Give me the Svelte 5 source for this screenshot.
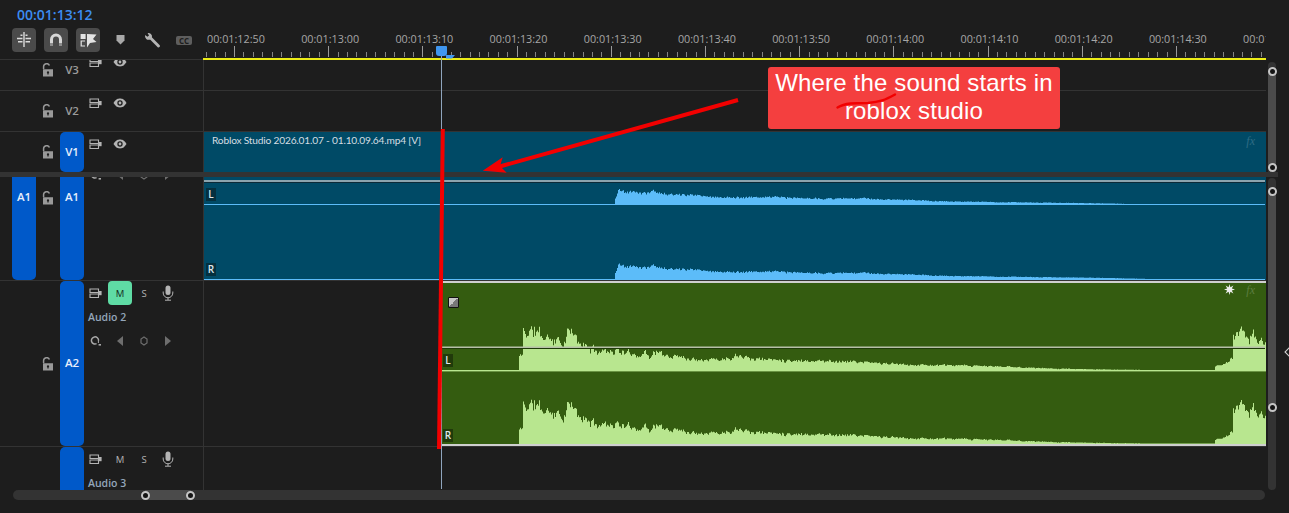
<script>
  const rulerLabels = ['00:01:12:50','00:01:13:00','00:01:13:10','00:01:13:20','00:01:13:30','00:01:13:40','00:01:13:50','00:01:14:00','00:01:14:10','00:01:14:20','00:01:14:30','00:01:14:40'];
  const step = 94.2 / 10;
  const ticks = [];
  for (let i = -3; i < 112; i++) ticks.push({ x: 31 + i * step, major: i % 10 === 0 });

  function rng(seed) {
    let s = seed >>> 0;
    return () => {
      s = (s + 0x6d2b79f5) >>> 0;
      let t = Math.imul(s ^ (s >>> 15), 1 | s);
      t = (t + Math.imul(t ^ (t >>> 7), 61 | t)) ^ t;
      return ((t ^ (t >>> 14)) >>> 0) / 4294967296;
    };
  }
  function wave(points, base, seed, amount) {
    const r = rng(seed);
    let d = `M${points[0][0]} ${base}`;
    let seg = 0;
    let slow = 0;
    for (let x = points[0][0]; x < points[points.length - 1][0]; x++) {
      while (seg < points.length - 2 && x >= points[seg + 1][0]) seg++;
      const [x0, h0] = points[seg];
      const [x1, h1] = points[seg + 1];
      const h = h0 + ((h1 - h0) * (x - x0)) / (x1 - x0);
      slow = slow * 0.55 + (r() - 0.5) * 0.6;
      const v = h * (1 + slow * amount * 2 + (r() - 0.5) * amount);
      const y = (base - v).toFixed(1);
      d += `L${x} ${y}L${x + 1} ${y}`;
    }
    return d + `L${points[points.length - 1][0]} ${base}Z`;
  }
  const greenEnv = [[518,0],[519,14],[522,16],[523,40],[526,37],[532,40],[537,38],[543,33],[550,32],[558,31],[561,27],[565,30],[568,38],[572,38],[576,30],[581,25],[586,24],[592,21],[600,19],[606,21],[612,19],[618,20],[626,17],[636,17],[641,14],[645,20],[650,13],[656,20],[662,15],[672,14],[680,15],[690,11],[700,12],[720,11],[730,13],[741,17],[750,12],[770,11],[800,10],[850,9],[900,6],[950,5],[1000,4],[1050,2],[1100,1],[1150,0.5],[1214,0.5],[1215,5],[1225,6],[1229,9],[1232,12],[1233,40],[1240,37],[1250,33],[1265,29],[1266,29]];
  const blueEnv = [[614,0],[615,6],[618,14],[625,12],[632,13],[640,11],[655,13],[665,10],[680,10],[700,9],[720,7],[750,7],[775,8],[800,6],[850,6],[900,5],[950,3],[1000,2.4],[1100,1.2],[1150,0]];
  const greenL = wave(greenEnv, 370.5, 11, 0.2);
  const greenR = wave(greenEnv, 444, 11, 0.2);
  const blueL = wave(blueEnv, 204.5, 5, 0.16);
  const blueR = wave(blueEnv, 279, 5, 0.16);
</script>

{#snippet lock()}
  <svg class="lock" width="12" height="14" viewBox="0 0 12 14"><path d="M1.6 6 V3.6 A3 3 0 0 1 7.4 2.6" fill="none" stroke="#999" stroke-width="1.5"/><path fill-rule="evenodd" d="M1 6.2 H11 V13.4 H1 Z M6 8.2 a1.2 1.2 0 0 0 -.6 2.2 V11.6 H6.6 V10.4 a1.2 1.2 0 0 0 -.6 -2.2 Z" fill="#999"/></svg>
{/snippet}
{#snippet sync()}
  <svg class="ic" width="14" height="11" viewBox="0 0 14 11"><path d="M1 1 H9.5 V4.5 H1 Z M1 6 H9.5 V9.5 H1 Z" fill="none" stroke="#b4b4b4" stroke-width="1.1"/><rect x="9" y="3" width="3.6" height="4.2" fill="#b4b4b4"/></svg>
{/snippet}
{#snippet eye()}
  <svg class="ic" width="14" height="10" viewBox="0 0 14 10"><path d="M0.5 5 C3 1 5 .6 7 .6 S11 1 13.5 5 C11 9 9 9.4 7 9.4 S3 9 .5 5 Z" fill="#b4b4b4"/><circle cx="7" cy="5" r="2.7" fill="#1d1d1d"/><circle cx="7" cy="5" r="1.4" fill="#b4b4b4"/></svg>
{/snippet}
{#snippet mic()}
  <svg class="ic" width="12" height="16" viewBox="0 0 12 16"><rect x="3.5" y="0.5" width="5" height="9.5" rx="2.5" fill="#b4b4b4"/><path d="M1.2 6.5 V8 A4.8 4.8 0 0 0 10.8 8 V6.5 M6 12.8 V15 M3 15.2 H9" fill="none" stroke="#b4b4b4" stroke-width="1"/></svg>
{/snippet}

{#snippet videoRow(name, active, cls)}
  <div class="hdr {cls}">
    <div class="inner">
      <span class="src"></span>
      <span class="lockcell">{@render lock()}</span>
      <span class="chip vchip" class:on={active}>{name}</span>
      <div class="vctl">
        <span class="cell">{@render sync()}</span>
        <span class="cell">{@render eye()}</span>
      </div>
    </div>
  </div>
{/snippet}

{#snippet audioHead(name, label, muted, source, cls)}
  <div class="hdr {cls}">
    <div class="inner ainner">
      <span class="src">{#if source}<span class="chip on">{source}</span>{/if}</span>
      <span class="lockcell">{@render lock()}</span>
      <span class="chip on">{name}</span>
      <div class="actl">
        <div class="btnrow">
          <span class="cell">{@render sync()}</span>
          <span class="cell ml" class:green={muted}>M</span>
          <span class="cell ml">S</span>
          <span class="cell">{@render mic()}</span>
        </div>
        <div class="tname">{label}</div>
        <div class="keyrow">
          <span class="cell">
            <svg width="12" height="12" viewBox="0 0 12 12"><path d="M8.6 5.5 A3.6 3.6 0 1 0 6.6 8.7" fill="none" stroke="#a8a8a8" stroke-width="1.5"/><path d="M8.4 5 V8" stroke="#a8a8a8" stroke-width="1"/><rect x="8.6" y="9" width="2.4" height="1.6" fill="#a8a8a8"/></svg>
          </span>
          <span class="cell"><svg width="8" height="10" viewBox="0 0 8 10"><path d="M7 0 V10 L1 5 Z" fill="#6e6e6e"/></svg></span>
          <span class="cell"><svg width="10" height="10" viewBox="0 0 10 10"><path d="M5 1 L8 3 V7 L5 9 L2 7 V3 Z" fill="none" stroke="#6e6e6e" stroke-width="1.2"/></svg></span>
          <span class="cell"><svg width="8" height="10" viewBox="0 0 8 10"><path d="M1 0 V10 L7 5 Z" fill="#6e6e6e"/></svg></span>
        </div>
      </div>
    </div>
  </div>
{/snippet}

<div class="app">
  <header class="top">
    <div class="controls">
      <div class="tc">00:01:13:12</div>
      <div class="tools">
        <button class="tool" aria-label="Insert and overwrite">
          <svg width="24" height="24" viewBox="0 0 24 24"><path d="M12 4 V19" stroke="#ddd" stroke-width="1.4"/><path d="M8.5 6.5 H10.5 V8 H8.5 Z M5 9.7 H10.5 V11.3 H5 Z M6 13 H10.5 V14.6 H6 Z M13.5 6.5 H15.5 V8 H13.5 Z M13.5 9.7 H19 V11.3 H13.5 Z M13.5 13 H18 V14.6 H13.5 Z" fill="#ddd"/></svg>
        </button>
        <button class="tool" aria-label="Snap">
          <svg width="24" height="24" viewBox="0 0 24 24"><path d="M7.5 15 V11.5 A4.5 4.5 0 0 1 16.5 11.5 V15" fill="none" stroke="#d6d6d6" stroke-width="3"/><path d="M7.5 15 V18 M16.5 15 V18" stroke="#8c8c8c" stroke-width="3"/></svg>
        </button>
        <button class="tool" aria-label="Linked selection">
          <svg width="24" height="24" viewBox="0 0 24 24"><rect x="4.6" y="6" width="5" height="5" fill="#e4e4e4"/><path d="M9 13 H5.2 V18 H9" fill="none" stroke="#e4e4e4" stroke-width="1.2"/><path d="M11 6 L20.5 6.5 L17 11 L20.5 14 L14 15 L11 19.5 Z" fill="#e4e4e4"/></svg>
        </button>
        <span class="cell"><svg width="9" height="10" viewBox="0 0 9 10"><path d="M.5 0 H8.5 V5.5 L4.5 9.5 L.5 5.5 Z" fill="#a8a8a8"/></svg></span>
        <span class="cell"><svg width="16" height="16" viewBox="0 0 16 16"><path d="M14.5 14 L6.8 6.2" stroke="#b4b4b4" stroke-width="2.8" stroke-linecap="round"/><path d="M6.2 7.4 A3.6 3.6 0 0 1 1.2 3 L3.4 4.8 L5 3.6 L3.6 1 A3.8 3.8 0 0 1 8 5.4 Z" fill="#b4b4b4"/></svg></span>
        <span class="cell"><span class="cc">CC</span></span>
      </div>
    </div>
    <div class="ruler">
      <div class="labels">
        {#each rulerLabels as t}<span class="rl">{t}</span>{/each}
      </div>
      <svg class="ticks" width="1063" height="12" viewBox="0 0 1063 12">
        {#each ticks as k}
          <rect x={Math.round(k.x)} y={k.major ? 0 : 6} width="1" height={k.major ? 11 : 5} fill={k.major ? '#9a9a9a' : '#858585'} />
        {/each}
      </svg>
      <div class="yellow"></div>
    </div>
  </header>

  <section class="group">
    <div class="tracks">
      <div class="row r30">
        {@render videoRow('V3', false, 'scrolled10')}
        <div class="lane"></div>
      </div>
      <div class="row r41">
        {@render videoRow('V2', false, '')}
        <div class="lane"></div>
      </div>
      <div class="row r40 noline">
        {@render videoRow('V1', true, '')}
        <div class="lane">
          <div class="clip blue">
            <span class="ctitle">Roblox Studio 2026.01.07 - 01.10.09.64.mp4 [V]</span>
            <span class="fx fx-blue">fx</span>
          </div>
        </div>
      </div>
    </div>
    <div class="vbar vb1"><div class="thumb t1"><i class="h"></i><i class="h"></i></div></div>
  </section>

  <div class="splitter"></div>

  <section class="group">
    <div class="tracks">
      <div class="row r104">
        {@render audioHead('A1', 'Audio 1', false, 'A1', 'scrolled63')}
        <div class="lane">
          <div class="clip blue">
            <svg class="wave" viewBox="204 177 1062 103" width="1062" height="103">
              <rect x="204" y="180" width="1061" height="2" fill="#8ba4ae"/>
              <rect x="204" y="182" width="1061" height="1" fill="#0b2a38"/>
              <path d={blueL} fill="#5cbcf9"/>
              <path d={blueR} fill="#5cbcf9"/>
              <rect x="204" y="204" width="1061" height="1" fill="#5cbcf9"/>
              <rect x="204" y="279" width="1061" height="1" fill="#5cbcf9"/>
            </svg>
            <span class="ch chA1L">L</span>
            <span class="ch chA1R">R</span>
          </div>
        </div>
      </div>
      <div class="row r166">
        {@render audioHead('A2', 'Audio 2', true, '', '')}
        <div class="lane">
          <div class="clip green">
            <svg class="wave" viewBox="442 281 824 165" width="824" height="165">
              <path d={greenL} fill="#b8e68f"/>
              <path d={greenR} fill="#b8e68f"/>
              <rect x="442" y="370" width="824" height="1.4" fill="#b8e68f"/>
              <rect x="442" y="346.5" width="823" height="1.6" fill="#b6bfa8"/>
              <rect x="442" y="348" width="823" height="1" fill="#1e3a08"/>
              <rect x="442" y="281" width="824" height="2" fill="#cfcfcf"/>
              <rect x="442" y="444" width="824" height="2" fill="#cfcfcf"/>
            </svg>
            <span class="badge"></span>
            <span class="ch chA2L">L</span>
            <span class="ch chA2R">R</span>
            <svg class="star" width="11" height="11" viewBox="0 0 11 11"><path d="M5.5 0 L6.4 3.2 L9.4 1.6 L7.8 4.6 L11 5.5 L7.8 6.4 L9.4 9.4 L6.4 7.8 L5.5 11 L4.6 7.8 L1.6 9.4 L3.2 6.4 L0 5.5 L3.2 4.6 L1.6 1.6 L4.6 3.2 Z" fill="#eee"/></svg>
            <span class="fx fx-green">fx</span>
          </div>
        </div>
      </div>
      <div class="row r42 noline">
        {@render audioHead('A3', 'Audio 3', false, '', 'a3')}
        <div class="lane"></div>
      </div>
    </div>
    <div class="vbar vb2"><div class="thumb t2"><i class="h"></i><i class="h"></i></div></div>
  </section>

  <div class="hscroll">
    <div class="hthumb"><i class="h"></i><i class="h"></i></div>
  </div>

  <div class="playhead"></div>
  <div class="phead"></div>
  <svg class="inout" width="10" height="4" viewBox="0 0 10 4"><path d="M0 0 H9 L6 3.4 H0 Z" fill="#3f96f0"/></svg>
  <svg class="chev" width="6" height="10" viewBox="0 0 6 10"><path d="M5.4 .6 L1 5 L5.4 9.4" fill="none" stroke="#cfcfcf" stroke-width="1.1"/></svg>

  <div class="note">Where the sound starts in<br />roblox studio</div>

  <svg class="ink" width="1289" height="513" viewBox="0 0 1289 513">
    <path d="M442.8 129 L439 449" stroke="#f20000" stroke-width="4" fill="none"/>
    <path d="M738 100 L498 167" stroke="#f20000" stroke-width="4" fill="none"/>
    <path d="M482.7 170.7 L502.7 157.3 L500 166 L506.7 172.7 Z" fill="#f20000"/>
    <path d="M837.5 107.5 C845 103 855 103 868 103 C880 102 885 100 895 94.5" stroke="#f20000" stroke-width="2.4" fill="none" stroke-linecap="round"/>
  </svg>
</div>

<style>
  :global(body) { margin: 0; background: #1d1d1d; }
  .app {
    position: relative;
    width: 1289px;
    height: 513px;
    overflow: hidden;
    background: #1d1d1d;
    font-family: "Open Sans", "Liberation Sans", sans-serif;
    color: #a8a8a8;
  }
  .top { display: flex; height: 60px; }
  .controls { width: 203px; padding-left: 12px; box-sizing: border-box; border-bottom: 1px solid #333; }
  .tc {
    margin: 6px 0 0 5px;
    height: 22px;
    font-size: 14px;
    line-height: 17px;
    font-weight: 600;
    color: #3c8cf0;
  }
  .tools { display: flex; gap: 8px; }
  .tool {
    width: 24px; height: 24px; padding: 0; border: 0;
    background: #4b4b4b; border-radius: 4px; display: block;
  }
  .tool svg { display: block; }
  .cell { width: 24px; height: 24px; display: flex; align-items: center; justify-content: center; flex: none; }
  .cc {
    width: 16px; height: 9px; border-radius: 2px; background: #5e5e5e; color: #1d1d1d;
    font-size: 8px; font-weight: 700; line-height: 9px; text-align: center;
  }
  .ruler { width: 1063px; height: 60px; position: relative; display: flex; flex-direction: column; overflow: hidden; }
  .labels { display: flex; height: 46px; padding-left: 4px; box-sizing: border-box; align-items: flex-start; }
  .rl { width: 94.2px; flex: none; font-size: 10.8px; line-height: 15px; margin-top: 31px; white-space: nowrap; color: #a6a6a6; }
  .ticks { display: block; height: 12px; }
  .yellow { height: 2px; background: #ecec17; }

  .group { display: flex; }
  .tracks { width: 1266px; flex: none; }
  .row { display: flex; box-sizing: border-box; border-bottom: 1px solid #333; overflow: hidden; }
  .noline { border-bottom: 0; }
  .r30 { height: 31px; }
  .r41 { height: 41px; }
  .r40 { height: 40px; }
  .r104 { height: 104px; }
  .r166 { height: 166px; }
  .r42 { height: 43px; }
  .hdr { width: 203px; flex: none; border-right: 1px solid #333; overflow: hidden; }
  .inner { display: flex; height: 40px; padding-left: 12px; }
  .ainner { height: 165px; }
  .scrolled10 .inner { margin-top: -10px; }
  .scrolled63 .inner { margin-top: -62px; }
  .src { width: 24px; flex: none; display: flex; }
  .lockcell { width: 24px; flex: none; display: flex; align-items: center; justify-content: center; }
  .lock { display: block; }
  .chip {
    width: 24px; flex: none; box-sizing: border-box; border-radius: 5px; padding-bottom: 2px;
    display: flex; align-items: center; justify-content: center;
    font-size: 11.5px; font-weight: 600; color: #9b9b9b;
  }
  .chip.on { background: #0059c9; color: #e6eefc; }
  .src .chip { height: 100%; }
  .vctl { display: flex; align-items: flex-start; height: 23px; }
  .ic { display: block; }
  .actl { display: flex; flex-direction: column; }
  .btnrow, .keyrow { display: flex; height: 24px; }
  .tname { margin-left: 4px; height: 24px; font-size: 10.5px; line-height: 24px; font-weight: 600; color: #94a6ba; }
  .ml { font-size: 9.5px; color: #b4b4b4; font-weight: 400; }
  .cell.green { background: #5fdca5; color: #14281d; border-radius: 4px; }

  .lane { width: 1062px; flex: none; position: relative; }
  .clip { position: relative; height: 100%; }
  .blue { background: #004a66; }
  .clip.green { margin-left: 238px; height: 165px; background: #345c10; }
  .wave { position: absolute; inset: 0; display: block; }
  .ctitle { position: absolute; left: 8px; top: 1px; font-family: Lato, "Open Sans", sans-serif; font-size: 10.2px; letter-spacing: -0.2px; line-height: 15px; color: #d4dde2; white-space: nowrap; }
  .fx { position: absolute; font-family: "Liberation Serif", serif; font-style: italic; font-size: 12px; line-height: 14px; }
  .fx-blue { right: 11px; top: 2px; color: #2f6c84; }
  .fx-green { right: 11px; top: 2px; color: #5c7c3f; }
  .star { position: absolute; left: 782px; top: 3px; }
  .ch {
    position: absolute; width: 10px; height: 13px; font-size: 10px; line-height: 13px;
    text-align: center; color: #dfe8ec; font-weight: 600;
  }
  .chA1L { left: 2px; top: 11px; background: #05303f; }
  .chA1R { left: 2px; top: 86px; background: #05303f; }
  .chA2L { left: 1px; top: 73px; background: #213a0b; }
  .chA2R { left: 1px; top: 148px; background: #213a0b; }
  .badge {
    position: absolute; left: 6px; top: 16px; width: 9px; height: 9px;
    border: 1px solid #111; border-radius: 1px;
    background: linear-gradient(135deg, #c6c6c6 50%, #777 50%);
  }

  .vbar { width: 8px; margin-left: 2px; flex: none; position: relative; }
  .vb1 { background: #333; height: 110px; margin-top: 2px; border-radius: 4px 4px 0 0; }
  .vb2 { background: #333; height: 312px; margin-top: 1px; border-radius: 4px; display: flex; flex-direction: column; }
  .thumb { background: #4b4b4b; display: flex; flex-direction: column; justify-content: space-between; align-items: center; }
  .t1 { margin-top: 9px; height: 97px; }
  .t2 { margin-top: 13px; height: 217px; }
  .h {
    display: block; width: 9px; height: 9px; box-sizing: border-box;
    border: 2px solid #c6c6c6; border-radius: 50%; background: #141414; flex: none;
    margin: -4px -1px;
  }

  .splitter { height: 5px; width: 1278px; background: #333; }

  .hscroll {
    width: 1252px; height: 10px; margin: 0 0 0 13px; background: #333; border-radius: 5px;
    position: relative;
  }
  .hthumb {
    position: absolute; left: 132px; width: 46px; height: 10px; background: #4b4b4b;
    display: flex; justify-content: space-between; align-items: center;
  }
  .hthumb .h { margin: 0 -4px; }

  .playhead { position: absolute; left: 441px; top: 56px; width: 1px; height: 433px; background: #8fa5bd; }
  .phead { position: absolute; left: 436px; top: 46px; width: 11px; height: 10px; background: #3f96f0; border-radius: 1px 1px 3px 3px; }
  .inout { position: absolute; left: 446px; top: 55px; }
  .chev { position: absolute; left: 1284px; top: 347px; }
  .note {
    position: absolute; left: 768px; top: 67px; width: 292px; height: 62px;
    box-sizing: border-box; padding-top: 2px;
    background: #f43f3f; border-radius: 3px; color: #fff;
    font-family: "Liberation Sans", Arial, sans-serif; font-size: 24px; line-height: 28px; letter-spacing: 0.16px; text-align: center;
  }
  .ink { position: absolute; left: 0; top: 0; pointer-events: none; }
</style>
